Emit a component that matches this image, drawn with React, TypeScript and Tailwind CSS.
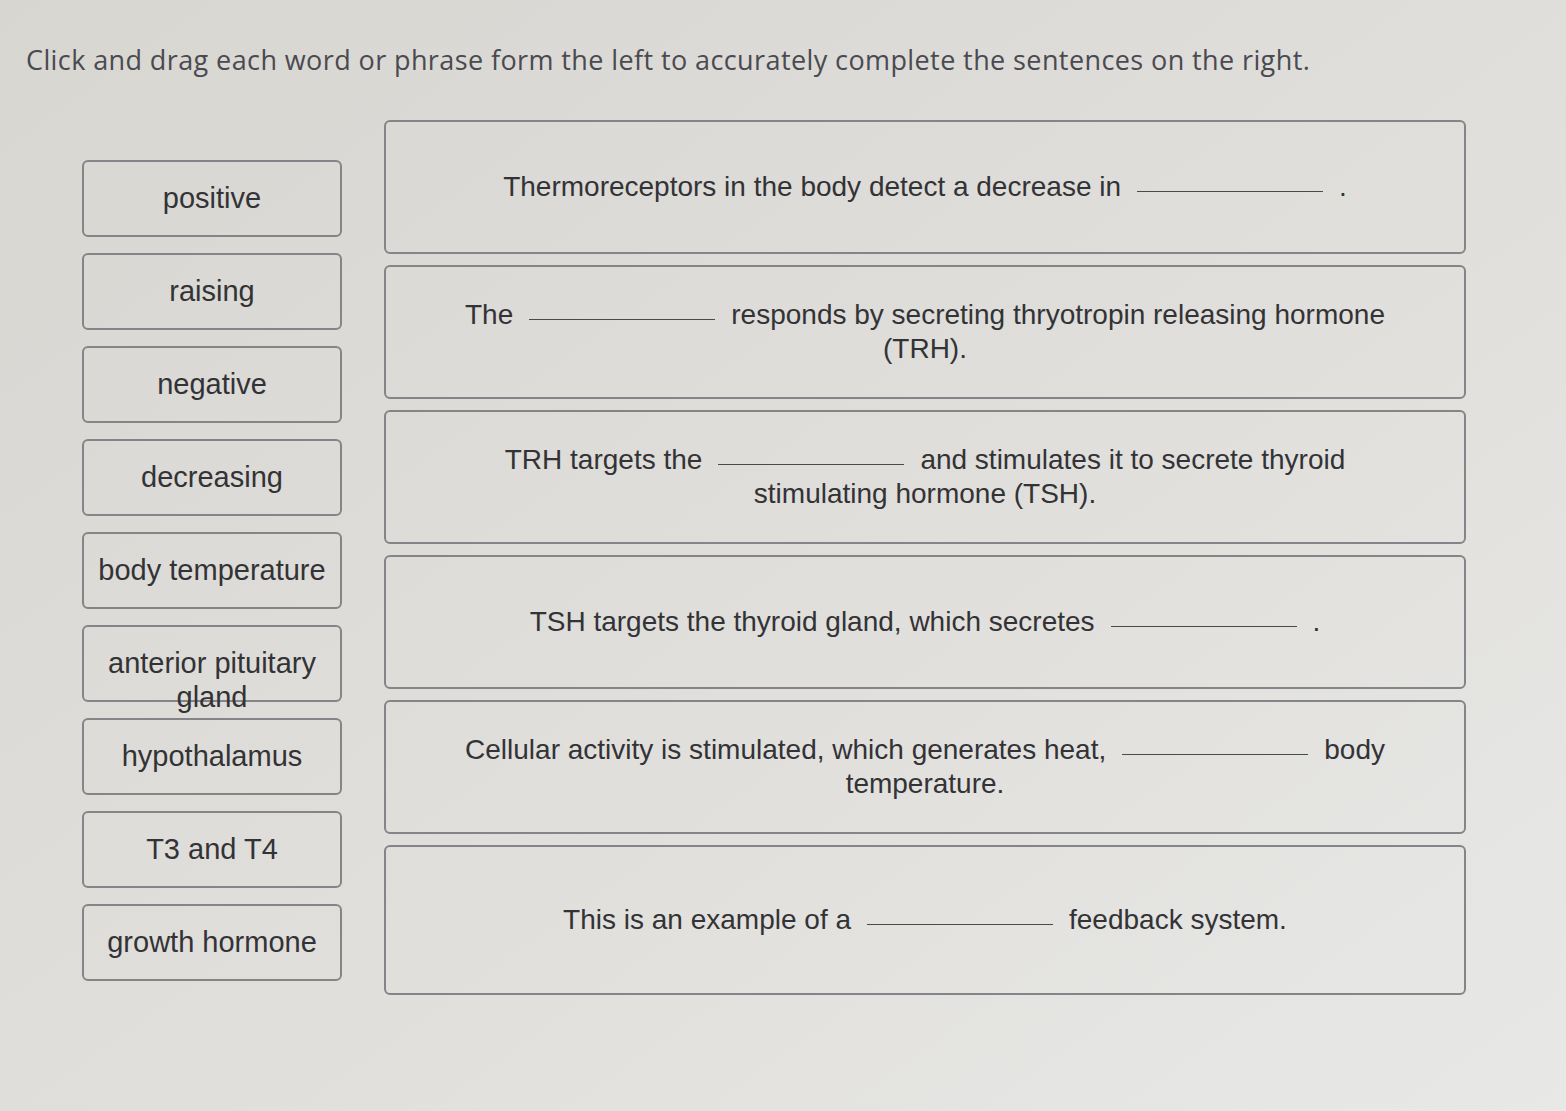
import React from "react";

const words = [
  "positive",
  "raising",
  "negative",
  "decreasing",
  "body temperature",
  "anterior pituitary gland",
  "hypothalamus",
  "T3 and T4",
  "growth hormone",
];

// each sentence is [before blank, after blank]
const sentences: { before: string; after: string; tall?: boolean }[] = [
  { before: "Thermoreceptors in the body detect a decrease in", after: "." },
  {
    before: "The",
    after: "responds by secreting thryotropin releasing hormone (TRH).",
  },
  {
    before: "TRH targets the",
    after: "and stimulates it to secrete thyroid stimulating hormone (TSH).",
  },
  { before: "TSH targets the thyroid gland, which secretes", after: "." },
  {
    before: "Cellular activity is stimulated, which generates heat,",
    after: "body temperature.",
  },
  { before: "This is an example of a", after: "feedback system.", tall: true },
];

const Blank = () => (
  <span className="mx-[16px] inline-block h-0 w-[186px] border-b-[1.5px] border-[#4a4a4a] align-[4px]" />
);

export default function App() {
  return (
    <div className="min-h-[1111px] w-full bg-gradient-to-br from-[#d7d6d1] via-[#dfdedb] to-[#e8e8e6] font-['Liberation_Sans',Arial,sans-serif] text-[#333336]">
      <h1 className="pl-[26px] pt-[44px] font-['Open_Sans',sans-serif] text-[27px] leading-[32px] tracking-[0.4px] text-[#4a4a50]">
        Click and drag each word or phrase form the left to accurately complete the sentences on the right.
      </h1>

      <div className="mt-[44px] flex items-start gap-[42px] pl-[82px]">
        {/* draggable answer tiles */}
        <div className="mt-[40px] flex w-[260px] flex-col gap-[16px]">
          {words.map((w) => (
            <div
              key={w}
              className="h-[77px] rounded-[6px] border-2 border-[#858589] px-[6px] pt-[19px] text-center text-[29px] leading-[34px]"
            >
              {w}
            </div>
          ))}
        </div>

        {/* sentences with drop targets */}
        <div className="flex w-[1082px] flex-col gap-[11px]">
          {sentences.map((s) => (
            <div
              key={s.before}
              className={`flex items-center justify-center rounded-[6px] border-2 border-[#858589] px-[60px] text-center text-[28px] leading-[34px] ${
                s.tall ? "h-[150px]" : "h-[134px]"
              }`}
            >
              <p>
                {s.before}
                <Blank />
                {s.after}
              </p>
            </div>
          ))}
        </div>
      </div>
    </div>
  );
}
